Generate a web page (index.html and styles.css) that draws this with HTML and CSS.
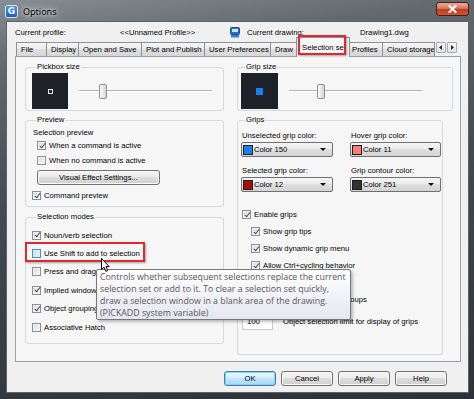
FILE: index.html
```html
<!DOCTYPE html>
<html>
<head>
<meta charset="utf-8">
<title>Options</title>
<link rel="stylesheet" href="styles.css">
</head>
<body>
<div class="window">
  <div class="titlebar">
    <div class="app-icon">G</div>
    <div class="title">Options</div>
    <div class="close"><svg width="11" height="8" viewBox="0 0 11 8"><path d="M2.5 1 L8.5 7 M8.5 1 L2.5 7" stroke="#fff" stroke-width="2" stroke-linecap="square"/></svg></div>
  </div>
  <div class="client">
    <div class="profile-row">
      <span class="pr-label">Current profile:</span>
      <span class="pr-value">&lt;&lt;Unnamed Profile&gt;&gt;</span>
      <svg class="pr-icon" width="10" height="11" viewBox="0 0 10 11"><rect x="0.5" y="0.5" width="9" height="7" rx="1" fill="#2a6fc9" stroke="#184b93"/><rect x="2" y="2" width="6" height="3" fill="#cfe3fa"/><rect x="1" y="8" width="8" height="2.5" fill="#3d7fd6"/></svg>
      <span class="pr-dlabel">Current drawing:</span>
      <span>Drawing1.dwg</span>
    </div>
    <div class="tabs">
      <div class="tab t-file">File</div>
      <div class="tab t-display">Display</div>
      <div class="tab t-open">Open and Save</div>
      <div class="tab t-plot">Plot and Publish</div>
      <div class="tab t-user">User Preferences</div>
      <div class="tab t-draw">Draw</div>
      <div class="tab tab-active">Selection se</div>
      <div class="tab t-profiles">Profiles</div>
      <div class="tab t-cloud">Cloud storage</div>
      <div class="tab-arrows">
        <span class="arr"><svg width="4" height="5" viewBox="0 0 4 5"><path d="M3 0 L0 2.5 L3 5 Z" fill="#222"/></svg></span>
        <span class="arr"><svg width="4" height="5" viewBox="0 0 4 5"><path d="M1 0 L4 2.5 L1 5 Z" fill="#222"/></svg></span>
      </div>
    </div>
    <div class="panel">
      <div class="col col-left">
        <fieldset class="group g-size g-size-left">
          <legend>Pickbox size</legend>
          <div class="size-row">
            <div class="preview-box pb-left"><span class="pickbox"></span></div>
            <div class="slider"><span class="thumb th-left"></span></div>
          </div>
        </fieldset>
        <fieldset class="group g-preview">
          <legend>Preview</legend>
          <div class="sub-label">Selection preview</div>
          <div class="cb-row pv-row ind"><span class="cb on"></span>When a command is active</div>
          <div class="cb-row pv-row ind"><span class="cb"></span>When no command is active</div>
          <div class="btn-line ind"><button class="btn btn-wide">Visual Effect Settings...</button></div>
          <div class="cb-row pv-row pv-last"><span class="cb on"></span>Command preview</div>
        </fieldset>
        <fieldset class="group g-modes">
          <legend>Selection modes</legend>
          <div class="cb-row mode-row"><span class="cb on"></span>Noun/verb selection</div>
          <div class="cb-row mode-row"><span class="cb hover"></span>Use Shift to add to selection</div>
          <div class="cb-row mode-row"><span class="cb"></span>Press and drag</div>
          <div class="cb-row mode-row"><span class="cb on"></span>Implied windowing</div>
          <div class="cb-row mode-row"><span class="cb on"></span>Object grouping</div>
          <div class="cb-row mode-row"><span class="cb"></span>Associative Hatch</div>
        </fieldset>
      </div>
      <div class="col col-right">
        <fieldset class="group g-size g-size-right">
          <legend>Grip size</legend>
          <div class="size-row">
            <div class="preview-box pb-right"><span class="grip"></span></div>
            <div class="slider"><span class="thumb th-right"></span></div>
          </div>
        </fieldset>
        <fieldset class="group g-grips">
          <legend>Grips</legend>
          <div class="color-grid">
            <div class="cell">
              <div class="cell-label">Unselected grip color:</div>
              <div class="combo"><span class="swatch sw-150"></span>Color 150<span class="arrow"></span></div>
            </div>
            <div class="cell">
              <div class="cell-label">Hover grip color:</div>
              <div class="combo"><span class="swatch sw-11"></span>Color 11<span class="arrow"></span></div>
            </div>
            <div class="cell">
              <div class="cell-label">Selected grip color:</div>
              <div class="combo"><span class="swatch sw-12"></span>Color 12<span class="arrow"></span></div>
            </div>
            <div class="cell">
              <div class="cell-label">Grip contour color:</div>
              <div class="combo"><span class="swatch sw-251"></span>Color 251<span class="arrow"></span></div>
            </div>
          </div>
          <div class="cb-row grip-row grip-first"><span class="cb on"></span>Enable grips</div>
          <div class="cb-row grip-row ind2"><span class="cb on"></span>Show grip tips</div>
          <div class="cb-row grip-row ind2"><span class="cb on"></span>Show dynamic grip menu</div>
          <div class="cb-row grip-row ind2"><span class="cb on"></span>Allow Ctrl+cycling behavior</div>
          <div class="cb-row grip-row ind2"><span class="cb on"></span>Show grips within blocks</div>
          <div class="cb-row grip-row ind2"><span class="cb on"></span>Show bounding box on groups</div>
          <div class="limit-row"><span class="num-box">100</span>Object selection limit for display of grips</div>
        </fieldset>
      </div>
    </div>
    <div class="buttons">
      <button class="btn btn-default">OK</button>
      <button class="btn">Cancel</button>
      <button class="btn">Apply</button>
      <button class="btn">Help</button>
    </div>
  </div>

  <span class="mark mark-tab"></span>
  <span class="mark mark-row"></span>

  <div class="tooltip">
    <div>Controls whether subsequent selections replace the current</div>
    <div>selection set or add to it. To clear a selection set quickly,</div>
    <div>draw a selection window in a blank area of the drawing.</div>
    <div>(PICKADD system variable)</div>
  </div>

  <svg class="cursor" width="10" height="15" viewBox="0 0 10 15"><path d="M0.5 0.5 L0.5 11.5 L3 9.2 L4.9 13.4 L6.7 12.6 L4.9 8.6 L8.2 8.6 Z" fill="#fff" stroke="#000" stroke-width="1" stroke-linejoin="round"/></svg>
</div>
</body>
</html>
```

FILE: styles.css
```css
* { box-sizing: border-box; }
html, body { margin: 0; padding: 0; }
body {
  width: 474px;
  height: 399px;
  overflow: hidden;
  background: #2e3439;
  font-family: "Liberation Sans", Arial, sans-serif;
  font-size: 7.7px;
  color: #000;
}

.window {
  position: relative;
  width: 474px;
  height: 399px;
  display: flex;
  flex-direction: column;
  background: linear-gradient(172deg, #878d93 0%, #62696f 14%, #434a51 45%, #2c3237 100%);
}

/* title bar */
.titlebar {
  height: 22px;
  flex: none;
  display: flex;
  align-items: center;
}
.app-icon {
  width: 11px;
  height: 11px;
  margin-left: 6px;
  margin-top: 1px;
  border-radius: 2px;
  background: linear-gradient(#4a95ec, #1a5ec6);
  box-shadow: 0 0 0 1px #d8e6f5;
  color: #fff;
  font: bold 9px/11px "DejaVu Sans", sans-serif;
  text-align: center;
}
.title {
  margin-left: 6px;
  font-family: "Noto Sans", "Open Sans", sans-serif;
  font-size: 9px;
  color: #000;
  text-shadow: 0 0 3px #dfe3e6, 0 0 6px #c9ced2, 0 0 9px #c9ced2;
}
.close {
  margin-left: auto;
  margin-right: 5px;
  align-self: flex-start;
  margin-top: 2px;
  width: 33px;
  height: 14px;
  border: 1px solid #4b1e14;
  border-radius: 3px;
  background: linear-gradient(#e9ab99 0%, #d7775f 45%, #c23c1f 52%, #cc5634 100%);
  display: flex;
  align-items: center;
  justify-content: center;
}

/* client */
.client {
  flex: none;
  margin: 0 6px 0 7px;
  height: 370px;
  background: #f0f0f0;
  box-shadow: 0 0 0 1px #5b6268;
  display: flex;
  flex-direction: column;
}

.profile-row {
  height: 16px;
  margin-top: 2px;
  padding-left: 8px;
  display: flex;
  align-items: center;
  white-space: nowrap;
}
.pr-label { width: 105px; }
.pr-value { width: 110px; }
.pr-icon { margin-right: 7px; flex: none; }
.pr-dlabel { width: 113px; }

/* tabs */
.tabs {
  height: 16px;
  padding-left: 9px;
  display: flex;
  align-items: flex-end;
  white-space: nowrap;
}
.tab {
  height: 14px;
  padding: 2px 0 0 4px;
  margin-left: -1px;
  border: 1px solid #8d9097;
  border-bottom: none;
  background: linear-gradient(#f6f6f6, #ececec 45%, #dfdfdf 50%, #d6d6d6);
  overflow: hidden;
}
.tab:first-child { margin-left: 0; }
.t-file { width: 31px; }
.t-display { width: 33px; }
.t-open { width: 64px; }
.t-plot { width: 64px; }
.t-user { width: 67px; }
.t-draw { width: 29px; }
.t-profiles { width: 36px; }
.t-cloud { width: 53px; }
.tab-active {
  position: relative;
  z-index: 1;
  width: 54px;
  height: 20px;
  margin-left: -3px;
  margin-right: -2px;
  margin-bottom: -1px;
  padding: 5px 0 0 5px;
  background: #f6f6f6;
}
.tab-arrows {
  display: flex;
  gap: 1px;
  margin-left: 1px;
  margin-bottom: 3px;
}
.arr {
  width: 10px;
  height: 11px;
  border: 1px solid #a9abb0;
  border-radius: 1px;
  background: linear-gradient(#f7f7f7, #e2e2e2);
  display: flex;
  align-items: center;
  justify-content: center;
}

/* panel */
.panel {
  margin-left: 8px;
  width: 446px;
  height: 306px;
  border: 1px solid #9a9ea5;
  background: #f6f6f6;
  padding: 5px 7px 0 9px;
  display: flex;
  gap: 13px;
}
.col { display: flex; flex-direction: column; align-items: flex-start; }
.col-left { width: 199px; }
.col-right { width: 216px; }

.group {
  margin: 0;
  padding: 0;
  min-width: 0;
  border: 1px solid #d6dadd;
  border-radius: 3px;
  width: 100%;
}
.group legend {
  padding: 0 1px;
  margin-left: 4px;
  line-height: 10px;
  height: 10px;
}

.g-size { padding: 1px 0 1px 6px; }
.g-size-right { padding-left: 3px; }
.size-row { display: flex; align-items: center; }
.preview-box {
  width: 36px;
  height: 36px;
  background: #1e2228;
  display: flex;
  align-items: center;
  justify-content: center;
}
.pb-right { width: 37px; }
.pickbox { width: 5px; height: 5px; border: 1px solid #e8e8e8; }
.grip { width: 7px; height: 7px; background: #1a7ff0; }
.slider {
  width: 133px;
  height: 15px;
  margin-left: 11px;
  display: flex;
  align-items: center;
  background: linear-gradient(transparent 6px, #b3b3b3 6px, #b3b3b3 7px, #ffffff 7px, #ffffff 8px, transparent 8px);
}
.thumb {
  width: 8px;
  height: 15px;
  border: 1px solid #8f8f8f;
  border-radius: 2px;
  background: linear-gradient(90deg, #fdfdfd, #e4e4e4 60%, #d3d3d3);
}
.th-left { margin-left: 20px; }
.th-right { margin-left: 28px; }

.g-preview { margin-top: 4px; padding: 3px 0 3px 6px; }
.sub-label { height: 10px; line-height: 10px; padding-left: 1px; }
.cb-row { display: flex; align-items: center; white-space: nowrap; }
.pv-row { height: 15px; }
.ind { padding-left: 5px; }
.ind2 { padding-left: 9px; }
.btn-line { margin-top: 2px; }
.pv-last { margin-top: 3px; }

.g-modes { margin-top: 5px; padding: 4px 0 7px 6px; }
.mode-row { height: 18.4px; }

.cb {
  flex: none;
  position: relative;
  width: 9px;
  height: 9px;
  margin-right: 3px;
  border: 1px solid #8e8f8f;
  background: linear-gradient(135deg, #d9d9d9, #f8f8f8);
  box-shadow: inset 0 0 0 1px #f3f3f3;
}
.cb.on::after {
  content: "";
  position: absolute;
  left: 2.5px;
  top: -0.5px;
  width: 2px;
  height: 5px;
  border: solid #34456f;
  border-width: 0 1.4px 1.4px 0;
  transform: rotate(38deg);
}
.cb.hover {
  border-color: #4d8ec0;
  background: linear-gradient(135deg, #bfe0f6, #eef8fe);
  box-shadow: inset 0 0 0 1px #d9eefb;
}

/* grips */
.g-grips { width: 206px; margin-top: 4px; padding: 5px 0 24px 3px; }
.color-grid {
  display: grid;
  grid-template-columns: 92px 91px;
  column-gap: 17px;
  row-gap: 8px;
}
.cell-label { height: 11px; line-height: 11px; padding-left: 1px; white-space: nowrap; }
.combo {
  height: 15px;
  margin-top: 1px;
  display: flex;
  align-items: center;
  padding-left: 1px;
  border: 1px solid #707070;
  border-radius: 2px;
  background: linear-gradient(#f5f5f5, #ececec 45%, #dfdfdf 50%, #d3d3d3);
  white-space: nowrap;
}
.swatch { width: 10px; height: 10px; border: 1px solid #1b1b1b; margin-right: 1px; flex: none; }
.sw-150 { background: #1a7ff0; }
.sw-11 { background: #f47f7c; }
.sw-12 { background: #a30f0f; }
.sw-251 { background: #333333; }
.combo .arrow {
  margin-left: auto;
  margin-right: 6px;
  width: 0;
  height: 0;
  border-left: 3px solid transparent;
  border-right: 3px solid transparent;
  border-top: 3px solid #111;
}
.grip-row { height: 17px; padding-left: 1px; }
.grip-row.ind2 { padding-left: 10px; }
.grip-first { margin-top: 14px; }
.limit-row {
  margin-top: 5px;
  height: 17px;
  padding-left: 1px;
  display: flex;
  align-items: center;
  white-space: nowrap;
}
.num-box {
  width: 31px;
  height: 17px;
  margin-right: 10px;
  padding-left: 4px;
  line-height: 16px;
  background: #fff;
  border: 1px solid #c7cad0;
}

/* buttons */
.btn {
  width: 52px;
  height: 15px;
  padding: 0;
  font: inherit;
  color: #000;
  border: 1px solid #707070;
  border-radius: 3px;
  background: linear-gradient(#f3f3f3, #ececec 45%, #dddddd 50%, #cfcfcf);
  box-shadow: inset 0 0 0 1px #fbfbfb;
}
.btn-wide { width: 123px; }
.btn-default {
  border-color: #3c7fb1;
  background: linear-gradient(#eaf6fd, #d9f0fc 45%, #bee6fd 50%, #a7d9f5);
  box-shadow: inset 0 0 0 1px #8fd0f2;
}
.buttons {
  margin-top: 9px;
  padding-right: 21px;
  display: flex;
  justify-content: flex-end;
  gap: 5px;
}

/* overlays */
.mark {
  position: absolute;
  z-index: 5;
  border: 2px solid #de2a2e;
  box-shadow: 1px 1px 2px rgba(0, 0, 0, 0.35);
}
.mark-tab { left: 298px; top: 35px; width: 48px; height: 20px; }
.mark-row { left: 25px; top: 242px; width: 120px; height: 20px; }

.tooltip {
  position: absolute;
  z-index: 6;
  left: 96px;
  top: 269px;
  width: 255px;
  height: 51px;
  padding: 1px 0 0 3px;
  border: 1px solid #767676;
  border-radius: 2px;
  background: linear-gradient(#ffffff, #e5e6f0);
  box-shadow: 2px 2px 3px rgba(0, 0, 0, 0.25);
  color: #575757;
  font-family: "Open Sans", "Noto Sans", sans-serif;
  font-size: 8.8px;
  line-height: 12px;
  white-space: nowrap;
}

.cursor { position: absolute; z-index: 7; left: 101px; top: 258px; }
```
